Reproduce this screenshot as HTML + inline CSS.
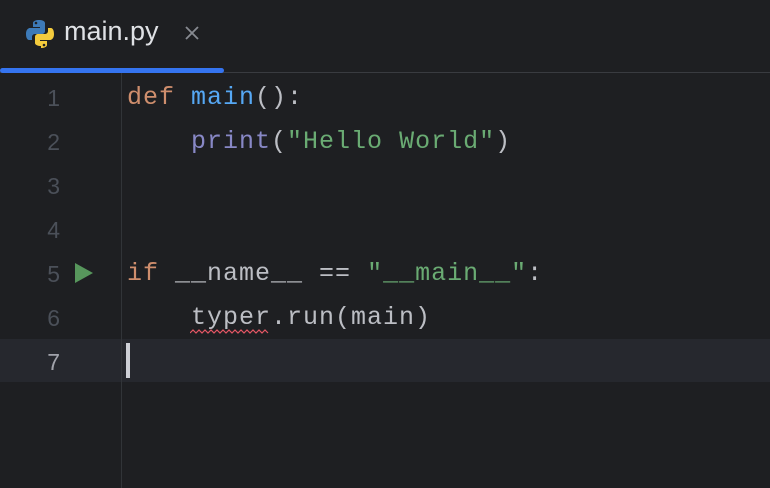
<!DOCTYPE html>
<html><head><style>
body{margin:0;width:770px;height:488px;background:#1e1f22;overflow:hidden;position:relative;font-family:"Liberation Mono",monospace}
.tab{position:absolute;left:64px;top:16px;font:27px "Liberation Sans",sans-serif;color:#dfe1e5}
.x{position:absolute;left:183px;top:24px;}
.border{position:absolute;left:0;top:72px;width:770px;height:1px;background:#393b40}
.ul{position:absolute;left:0;top:68px;width:224px;height:5px;background:#3574f0;border-radius:3px}
.gut{position:absolute;left:121px;top:73px;width:1px;height:415px;background:#313438}
.cur{position:absolute;left:0;top:339px;width:770px;height:43px;background:#26282e}
.ln{position:absolute;width:60px;text-align:right;left:0;font-size:23px;color:#4b5059;font-family:"Liberation Sans",sans-serif}
.code{position:absolute;left:127px;font-size:25px;letter-spacing:1px;color:#bcbec4;white-space:pre}
.k{color:#cf8e6d}.f{color:#56a8f5}.b{color:#8888c6}.s{color:#6aab73}
.caret{position:absolute;left:126px;top:343px;width:4px;height:35px;background:#ced0d6}
</style></head><body>
<svg style="position:absolute;left:26px;top:19px" width="28" height="30" viewBox="0 0 28 30">
<path d="M13 1c-6 0-6 3-6 3v4h7v1H4S0 9 0 15s3 6 3 6h3v-3s0-3 3-3h7s3 0 3-3V4s0-3-6-3z" fill="#3d7ab8"/>
<circle cx="10" cy="4" r="1.3" fill="#1e1f22"/>
<path d="M15 29c6 0 6-3 6-3v-4h-7v-1h10s4 0 4-6-3-6-3-6h-3v3s0 3-3 3h-7s-3 0-3 3v6s0 3 6 3z" fill="#f4cb3d"/>
<circle cx="18" cy="26" r="1.3" fill="#1e1f22"/>
</svg>
<div class="tab">main.py</div>
<svg class="x" width="18" height="18" viewBox="0 0 18 18"><path d="M3 3L15 15M15 3L3 15" stroke="#878a91" stroke-width="1.8"/></svg>
<div class="border"></div><div class="ul"></div>
<div class="cur"></div>
<div class="gut"></div>
<div class="ln" style="top:85px">1</div>
<div class="ln" style="top:129px">2</div>
<div class="ln" style="top:173px">3</div>
<div class="ln" style="top:217px">4</div>
<div class="ln" style="top:261px">5</div>
<div class="ln" style="top:305px">6</div>
<div class="ln" style="top:349px;color:#a1a3ab">7</div>
<svg style="position:absolute;left:74px;top:262px" width="20" height="22"><path d="M1 1L19 11L1 21Z" fill="#57965c"/></svg>
<div class="code" style="top:83px"><span class="k">def</span> <span class="f">main</span>():</div>
<div class="code" style="top:127px">    <span class="b">print</span>(<span class="s">"Hello World"</span>)</div>
<div class="code" style="top:259px"><span class="k">if</span> __name__ == <span class="s">"__main__"</span>:</div>
<div class="code" style="top:303px">    typer.run(main)</div>
<svg style="position:absolute;left:190px;top:329px" width="82" height="6"><path d="M0 4 l3-3 3 3 3-3 3 3 3-3 3 3 3-3 3 3 3-3 3 3 3-3 3 3 3-3 3 3 3-3 3 3 3-3 3 3 3-3 3 3 3-3 3 3 3-3 3 3 3-3 3 3" fill="none" stroke="#e55765" stroke-width="1.2"/></svg>
<div class="caret"></div>
</body></html>
